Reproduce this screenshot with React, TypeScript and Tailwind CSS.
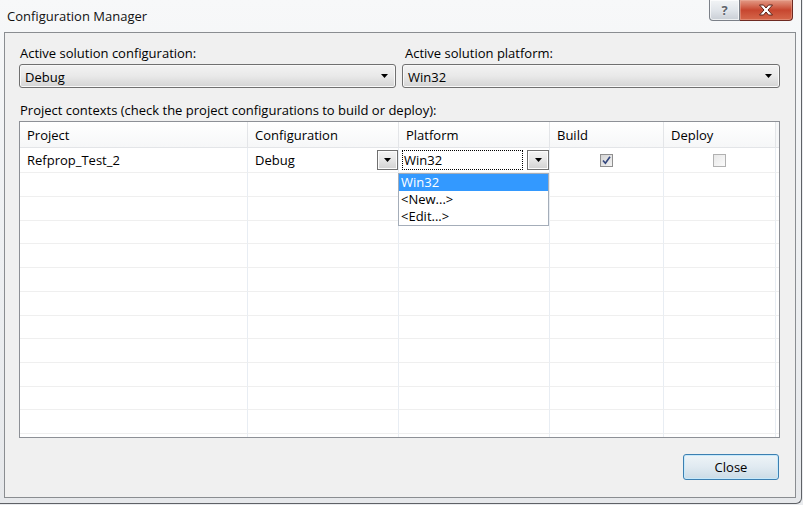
import React from "react";

// row heights inside the project grid (bottom line included)
const rowHeights = [
  "h-[24px]",
  "h-[24px]",
  "h-[23px]",
  "h-[24px]",
  "h-[24px]",
  "h-[24px]",
  "h-[23px]",
  "h-[24px]",
  "h-[24px]",
  "h-[23px]",
  "h-[24px]",
  "h-[3px]",
];

const columns = ["Project", "Configuration", "Platform", "Build", "Deploy"];

const Arrow = () => (
  <svg width="7" height="4" viewBox="0 0 7 4">
    <path d="M0 0 H7 L3.5 4 Z" fill="#000" />
  </svg>
);

const DropButton = ({ className = "" }: { className?: string }) => (
  <div
    className={`flex h-[20px] items-center justify-center border border-[#707070] bg-gradient-to-b from-[#f4f4f4] via-[#e6e6e6] to-[#d2d2d2] shadow-[inset_0_0_0_1px_#fcfcfc] ${className}`}
  >
    <Arrow />
  </div>
);

const Combo = ({ value }: { value: string }) => (
  <div className="flex h-[24px] items-center justify-between rounded-[3px] border border-[#707070] bg-gradient-to-b from-[#f3f3f3] via-[#e9e9e9] to-[#d4d4d4] pl-[5px] pr-[7px] shadow-[inset_0_0_0_1px_#f9f9f9]">
    <span className="pt-[2px] text-[13px] leading-[16px] text-black">{value}</span>
    <Arrow />
  </div>
);

const CheckBox = ({ checked }: { checked: boolean }) => (
  <div
    className={`flex h-[13px] w-[13px] items-center justify-center border ${
      checked
        ? "border-[#8f8f8f] bg-gradient-to-br from-[#d4d4d4] to-[#f2f2f2]"
        : "border-[#b1b1b1] bg-gradient-to-br from-[#e8e8e8] to-[#fbfbfb]"
    }`}
  >
    {checked && (
      <svg width="9" height="9" viewBox="0 0 9 9">
        <path
          d="M1 4.5 L3.4 7.2 L8 0.8"
          fill="none"
          stroke="#34477e"
          strokeWidth="1.7"
        />
      </svg>
    )}
  </div>
);

const TitleButtons = () => (
  <div className="mr-[8px] ml-auto flex h-[21px]">
    <div className="flex w-[31px] items-center justify-center rounded-bl-[4px] border border-t-0 border-[#7b8088] bg-gradient-to-b from-[#f2f4f6] via-[#e1e5ea] to-[#c9ced5] shadow-[inset_0_0_0_1px_#ffffffaa]">
      <span className="text-[13px] font-bold leading-none text-[#5d636b] [text-shadow:0_0_2px_#fff]">
        ?
      </span>
    </div>
    <div className="flex w-[53px] items-center justify-center rounded-br-[4px] border border-t-0 border-l-0 border-[#6e2a22] bg-gradient-to-b from-[#e29a86] via-[#c7462f] to-[#d5674b] shadow-[inset_0_0_0_1px_#f2b9a866]">
      <svg width="16" height="12" viewBox="0 0 16 12">
        <path
          d="M1.5 1 H5.5 L8 4 L10.5 1 H14.5 L10 6 L14.5 11 H10.5 L8 8 L5.5 11 H1.5 L6 6 Z"
          fill="#fff"
          stroke="#5b2218"
          strokeWidth="1"
          strokeLinejoin="round"
        />
      </svg>
    </div>
  </div>
);

const cellLine = "border-r border-b border-r-[#e8edf3] border-b-[#efefef]";

export default function App() {
  return (
    <div
      className="h-[505px] w-[803px] overflow-hidden bg-[#e9ebee]"
      style={{ fontFamily: '"Open Sans", "Noto Sans", sans-serif' }}
    >
      {/* window */}
      <div className="h-[504px] w-[802px] rounded-br-[6px] border-r border-b border-[#5e6166] bg-gradient-to-b from-[#f7f8f9] via-[#eef0f2] to-[#e6e8eb]">
        {/* title bar */}
        <div className="flex h-[32px] flex-col">
          <div className="flex h-[21px]">
            <div className="flex flex-col">
              <div className="h-[2px] w-[300px] bg-gradient-to-r from-[#1e1e1e] via-[#3a3a3a] to-transparent" />
              <span className="mt-[8px] ml-[7px] text-[13px] leading-[16px] text-[#111]">
                Configuration Manager
              </span>
            </div>
            <TitleButtons />
          </div>
        </div>

        {/* client area */}
        <div className="ml-[4px] flex h-[466px] w-[792px] flex-col border border-[#8a8d91] bg-[#f0f0f0] pt-[12px] pr-[15px] pl-[14px]">
          <div className="grid grid-cols-[377px_378px] gap-x-[6px]">
            <div className="flex flex-col gap-[3px]">
              <span className="pl-[1px] text-[13px] leading-[16px] text-black">
                Active solution configuration:
              </span>
              <Combo value="Debug" />
            </div>
            <div className="flex flex-col gap-[3px]">
              <span className="pl-[3px] text-[13px] leading-[16px] text-black">
                Active solution platform:
              </span>
              <Combo value="Win32" />
            </div>
          </div>

          <span className="mt-[14px] pl-[1px] text-[13px] leading-[16px] text-black">
            Project contexts (check the project configurations to build or
            deploy):
          </span>

          {/* project grid */}
          <div className="mt-[3px] h-[317px] border border-[#8d9096] bg-white">
            <div className="grid grid-cols-[228px_151px_151px_114px_112px_1fr]">
              {/* header */}
              {columns.map((c) => (
                <div
                  key={c}
                  className="flex h-[26px] items-center border-r border-b border-[#e3e5e8] bg-gradient-to-b from-white to-[#f6f7f8] pt-[2px] pl-[7px] text-[13px] text-black"
                >
                  {c}
                </div>
              ))}
              <div className="h-[26px] border-b border-[#e3e5e8] bg-[#f6f7f8]" />

              {/* data row */}
              <div className={`flex h-[25px] items-center pt-[2px] pl-[7px] text-[13px] text-black ${cellLine}`}>
                Refprop_Test_2
              </div>
              <div className={`flex h-[25px] items-center pl-[7px] text-[13px] text-black ${cellLine}`}>
                <span className="pt-[2px]">Debug</span>
                <DropButton className="ml-auto w-[21px]" />
              </div>
              <div className={`relative flex h-[25px] items-center pl-[3px] text-[13px] text-black ${cellLine}`}>
                <div className="flex h-[20px] w-[121px] items-center border border-dotted border-black pt-[1px] pl-[1px]">
                  Win32
                </div>
                <DropButton className="ml-auto w-[22px]" />
                {/* open dropdown list */}
                <div className="absolute top-[25px] left-[-1px] z-10 flex w-[151px] flex-col border border-[#a4adb9] bg-white text-[13px] leading-[17px]">
                  <span className="bg-[#3399ff] pl-[2px] text-white">Win32</span>
                  <span className="pl-[2px] text-black">&lt;New...&gt;</span>
                  <span className="pl-[2px] text-black">&lt;Edit...&gt;</span>
                </div>
              </div>
              <div className={`flex h-[25px] items-center justify-center ${cellLine}`}>
                <CheckBox checked />
              </div>
              <div className={`flex h-[25px] items-center justify-center ${cellLine}`}>
                <CheckBox checked={false} />
              </div>
              <div className="h-[25px] border-b border-[#efefef]" />

              {/* empty rows */}
              {rowHeights.map((h, i) =>
                [0, 1, 2, 3, 4, 5].map((col) => (
                  <div
                    key={`${i}-${col}`}
                    className={`${h} border-b border-b-[#efefef] ${
                      col < 5 ? "border-r border-r-[#e8edf3]" : ""
                    } ${i === rowHeights.length - 1 ? "border-b-0" : ""}`}
                  />
                ))
              )}
            </div>
          </div>

          <div className="mt-[16px] flex justify-end pr-[1px]">
            <button className="h-[26px] w-[96px] rounded-[3px] border border-[#3c7fb1] bg-gradient-to-b from-[#eef4f8] via-[#e0eaf1] to-[#cbdbe6] pt-[1px] text-[13px] text-black shadow-[inset_0_0_0_1px_#c6e9fb]">
              Close
            </button>
          </div>
        </div>
      </div>
    </div>
  );
}
